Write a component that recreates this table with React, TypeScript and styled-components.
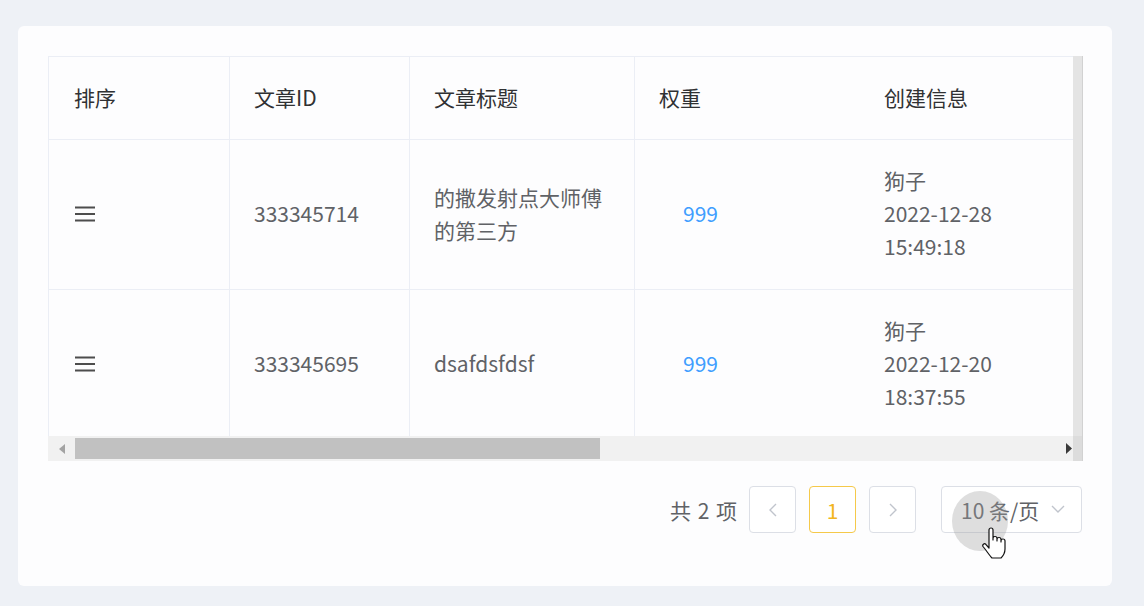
import React from "react";
import styled, { createGlobalStyle } from "styled-components";

const Global = createGlobalStyle`
  html, body { margin: 0; padding: 0; }
  body {
    background: #eef1f6;
    font-family: "Noto Sans CJK SC", "Noto Sans", sans-serif;
    width: 1144px;
    height: 606px;
    overflow: hidden;
  }
`;

const Page = styled.div`
  padding: 26px 0 0 18px;
`;

const Card = styled.div`
  position: relative;
  width: 1094px;
  height: 560px;
  box-sizing: border-box;
  padding: 30px 30px 0 30px;
  background: #fdfdfe;
  border-radius: 6px;
`;

const TableWrap = styled.div`
  width: 1035px;
  display: flex;
  flex-direction: column;
`;

const TableBody = styled.div`
  display: flex;
  height: 380px;
`;

const Viewport = styled.div`
  width: 1025px;
  overflow: hidden;
  border-top: 1px solid #ebeef5;
  border-left: 1px solid #ebeef5;
  box-sizing: border-box;
`;

const VScroll = styled.div`
  width: 10px;
  background: #e4e4e4;
  border-right: 1px solid #d2d2d2;
  box-sizing: border-box;
`;

const Row = styled.div<{ $h: number }>`
  display: grid;
  grid-template-columns: 181px 180px 225px 225px 400px;
  height: ${(p) => p.$h}px;
  box-sizing: border-box;
  border-bottom: 1px solid #ebeef5;
`;

const Cell = styled.div<{ $head?: boolean; $noRight?: boolean; $pad?: number }>`
  display: flex;
  align-items: center;
  box-sizing: border-box;
  padding-left: ${(p) => p.$pad ?? 24}px;
  padding-right: 24px;
  padding-bottom: 2px;
  border-right: ${(p) => (p.$noRight ? "none" : "1px solid #ebeef5")};
  font-size: 21px;
  line-height: 33px;
  color: ${(p) => (p.$head ? "#303133" : "#606266")};
`;

const Multi = styled.div`
  display: flex;
  flex-direction: column;
`;

const Link = styled.span`
  color: #409eff;
`;

const HScroll = styled.div`
  height: 25px;
  display: flex;
  align-items: center;
  background: #f1f1f1;
`;

const ArrowBox = styled.div<{ $end?: boolean }>`
  width: ${(p) => (p.$end ? 16 : 27)}px;
  height: 25px;
  display: flex;
  align-items: center;
  justify-content: ${(p) => (p.$end ? "flex-end" : "center")};
  padding-right: ${(p) => (p.$end ? 1 : 0)}px;
  box-sizing: border-box;
`;

const Thumb = styled.div`
  width: 525px;
  height: 21px;
  background: #c1c1c1;
`;

const Track = styled.div`
  flex: 1;
`;

const Corner = styled.div`
  width: 10px;
  height: 25px;
  background: #dcdcdc;
  border-right: 1px solid #d2d2d2;
  box-sizing: border-box;
`;

const Pager = styled.div`
  display: flex;
  justify-content: flex-end;
  align-items: center;
  margin-top: 25px;
  font-size: 21px;
  color: #606266;
`;

const Total = styled.span`
  margin-right: 11px;
  letter-spacing: 1px;
`;

const PageBtn = styled.div<{ $active?: boolean }>`
  width: 47px;
  height: 47px;
  box-sizing: border-box;
  border: 1px solid ${(p) => (p.$active ? "#f5c94a" : "#dcdfe6")};
  border-radius: 4px;
  display: flex;
  align-items: center;
  justify-content: center;
  margin-right: 13px;
  color: ${(p) => (p.$active ? "#f2b520" : "#c0c4cc")};
  background: #fff;
`;

const Select = styled.div`
  width: 141px;
  height: 47px;
  box-sizing: border-box;
  border: 1px solid #dcdfe6;
  border-radius: 4px;
  margin-left: 12px;
  display: flex;
  align-items: center;
  justify-content: space-between;
  padding: 0 16px 0 19px;
  color: #606266;
  background: #fff;
`;

const ClickRing = styled.div`
  position: absolute;
  left: 934px;
  top: 465px;
  width: 56px;
  height: 60px;
  border-radius: 50%;
  background: rgba(160, 160, 160, 0.35);
  pointer-events: none;
`;

const Cursor = styled.svg`
  position: absolute;
  left: 964px;
  top: 500px;
  pointer-events: none;
`;

const MenuIcon = () => (
  <svg width="20" height="16" viewBox="0 0 20 16">
    <rect x="0" y="0.5" width="20" height="2" fill="#4d4d4d" />
    <rect x="0" y="7" width="20" height="2" fill="#4d4d4d" />
    <rect x="0" y="13.5" width="20" height="2" fill="#4d4d4d" />
  </svg>
);

const Chevron = ({ dir }: { dir: "left" | "right" | "down" }) => {
  const d =
    dir === "left" ? "M9 2 L3 8 L9 14" : dir === "right" ? "M3 2 L9 8 L3 14" : "M1 4 L7 10 L13 4";
  const w = dir === "down" ? 14 : 12;
  return (
    <svg width={w} height="16" viewBox={`0 0 ${w} 16`}>
      <path d={d} fill="none" stroke="#c0c4cc" strokeWidth="1.4" />
    </svg>
  );
};

const rows = [
  { id: "333345714", title: ["的撒发射点大师傅", "的第三方"], date: "2022-12-28", time: "15:49:18" },
  { id: "333345695", title: ["dsafdsfdsf"], date: "2022-12-20", time: "18:37:55" },
];

export default function App() {
  return (
    <Page>
      <Global />
      <Card>
        <TableWrap>
          <TableBody>
            <Viewport>
              <Row $h={83}>
                <Cell $head $pad={25}>排序</Cell>
                <Cell $head>文章ID</Cell>
                <Cell $head>文章标题</Cell>
                <Cell $head $noRight>权重</Cell>
                <Cell $head $noRight>创建信息</Cell>
              </Row>
              {rows.map((r) => (
                <Row $h={150} key={r.id}>
                  <Cell $pad={26}>
                    <MenuIcon />
                  </Cell>
                  <Cell>{r.id}</Cell>
                  <Cell>
                    <Multi>
                      {r.title.map((t) => (
                        <span key={t}>{t}</span>
                      ))}
                    </Multi>
                  </Cell>
                  <Cell $noRight $pad={48}>
                    <Link>999</Link>
                  </Cell>
                  <Cell $noRight>
                    <Multi>
                      <span>狗子</span>
                      <span>{r.date}</span>
                      <span>{r.time}</span>
                    </Multi>
                  </Cell>
                </Row>
              ))}
            </Viewport>
            <VScroll />
          </TableBody>
          <HScroll>
            <ArrowBox>
              <svg width="6" height="10" viewBox="0 0 6 10">
                <path d="M6 0 L0 5 L6 10 Z" fill="#a3a3a3" />
              </svg>
            </ArrowBox>
            <Thumb />
            <Track />
            <ArrowBox $end>
              <svg width="6" height="11" viewBox="0 0 6 11">
                <path d="M0 0 L6 5.5 L0 11 Z" fill="#3a3a3a" />
              </svg>
            </ArrowBox>
            <Corner />
          </HScroll>
        </TableWrap>
        <Pager>
          <Total>共 2 项</Total>
          <PageBtn>
            <Chevron dir="left" />
          </PageBtn>
          <PageBtn $active>1</PageBtn>
          <PageBtn>
            <Chevron dir="right" />
          </PageBtn>
          <Select>
            <span>10 条/页</span>
            <Chevron dir="down" />
          </Select>
        </Pager>
        <ClickRing />
        <Cursor width="24" height="34" viewBox="0 0 24 34">
          <path
            d="M7 19 V4 a2 2 0 0 1 4 0 V14 V12.5 a2 2 0 0 1 4 0 V15 V13.5 a2 2 0 0 1 4 0 V16 V15 a2 2 0 0 1 4 0 V23 c0 4 -2 7 -4 9 H10 c-2 -2 -4 -5 -7 -9 L1 20.5 a1.8 1.8 0 0 1 2.8 -2.2 L7 22 Z"
            fill="#fff"
            stroke="#111"
            strokeWidth="1.2"
            strokeLinejoin="round"
          />
        </Cursor>
      </Card>
    </Page>
  );
}
